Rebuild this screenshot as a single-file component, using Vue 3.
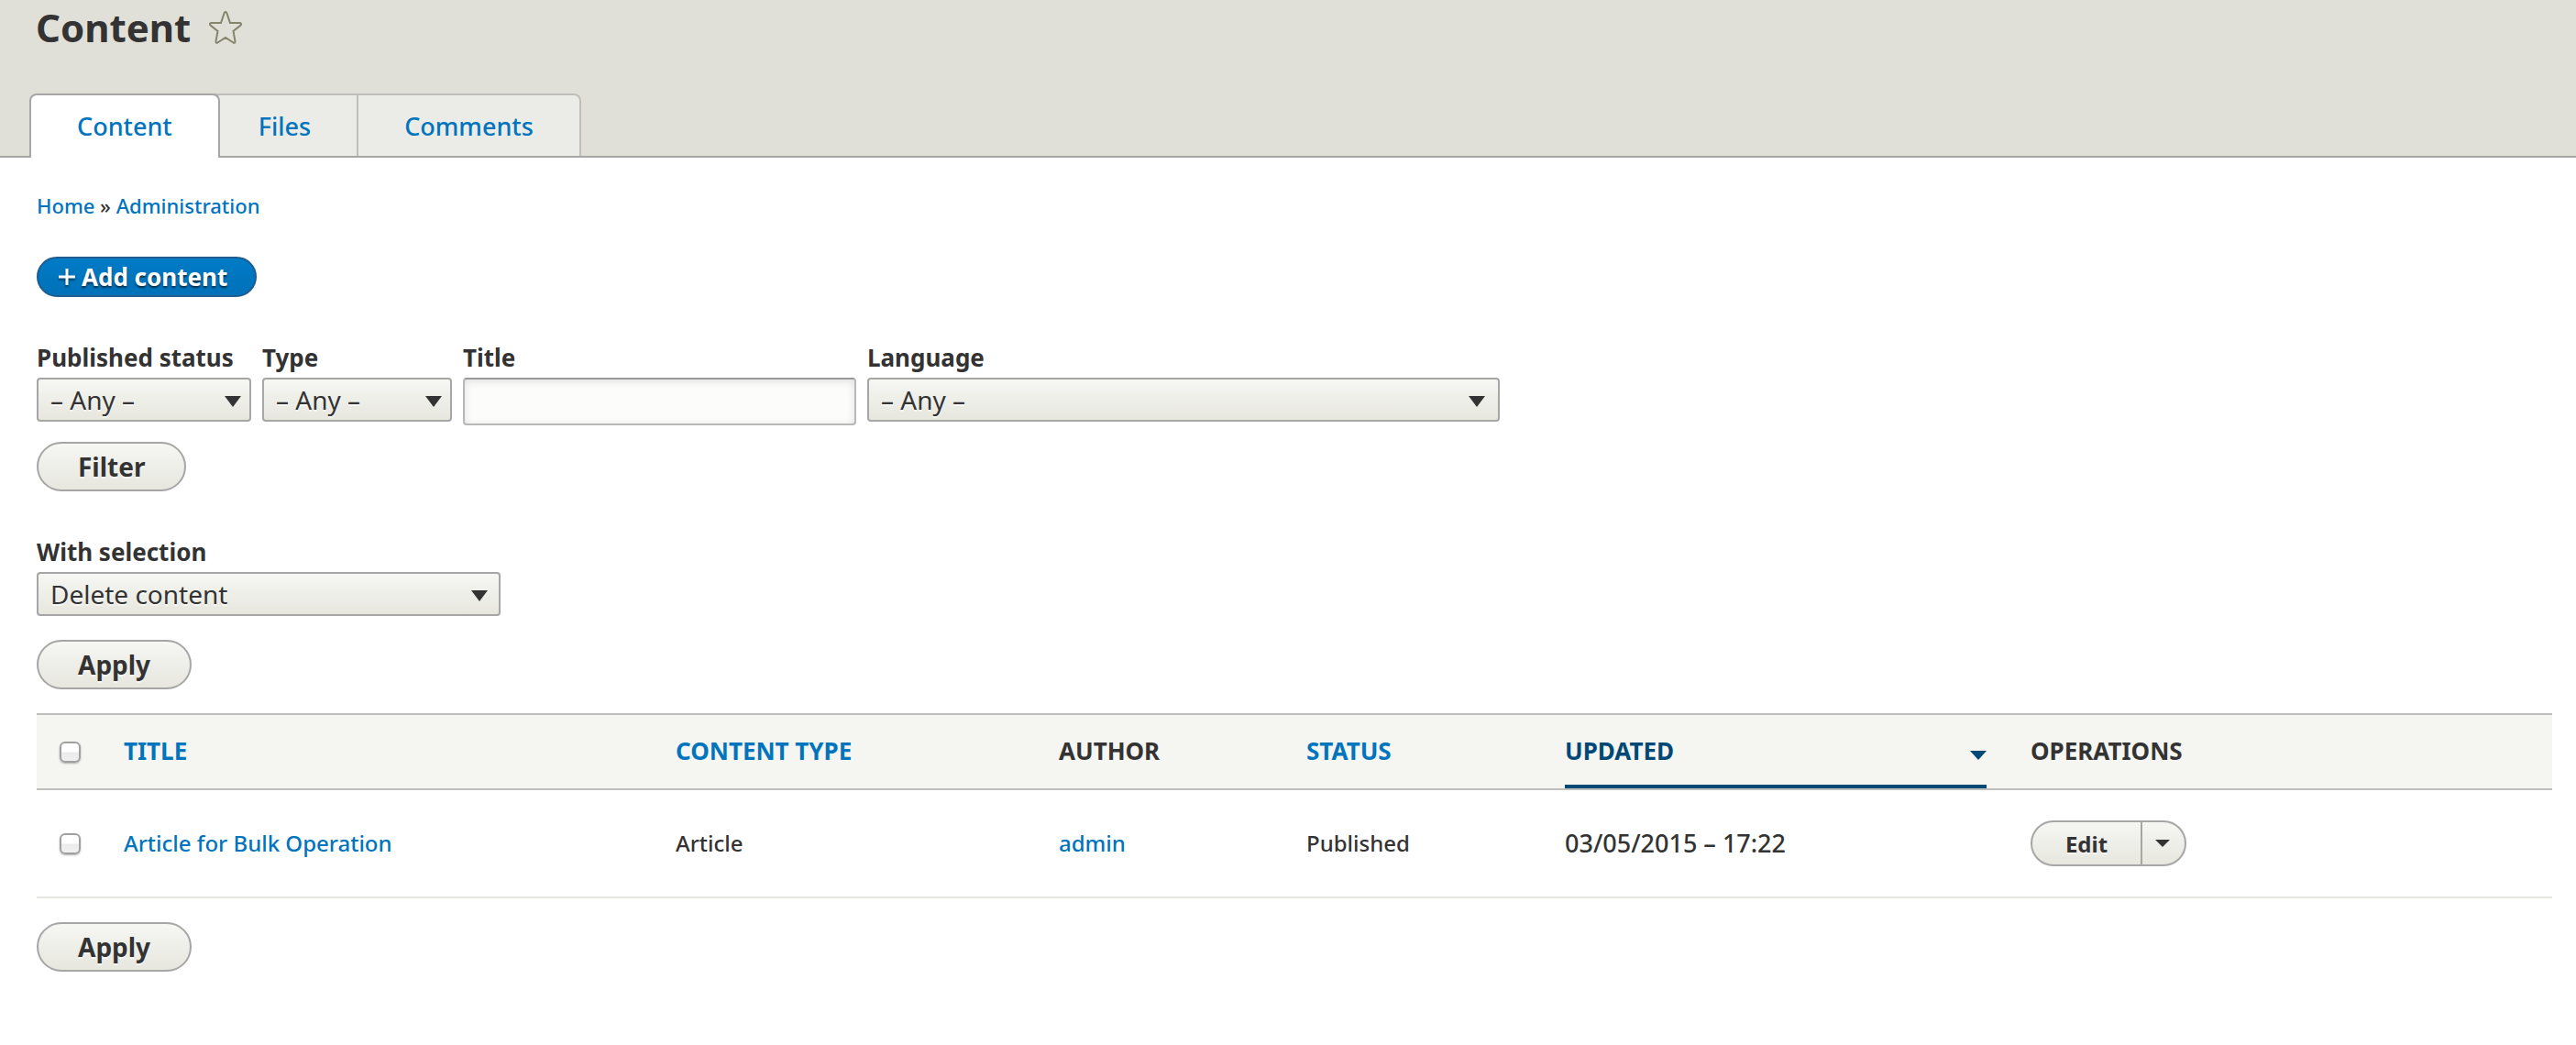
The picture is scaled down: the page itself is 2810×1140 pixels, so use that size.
<script setup>
import { ref } from 'vue'

const tabs = [
  { label: 'Content', active: true },
  { label: 'Files', active: false },
  { label: 'Comments', active: false },
]

const status = ref('any')
const type = ref('any')
const title = ref('')
const language = ref('any')
const action = ref('delete')

const rows = [
  {
    id: 1,
    title: 'Article for Bulk Operation',
    type: 'Article',
    author: 'admin',
    status: 'Published',
    updated: '03/05/2015 – 17:22',
  },
]
</script>

<template>
  <div class="page">
    <header class="header">
      <div class="heading">
        <h1>Content</h1>
        <button type="button" class="star" aria-label="Add to shortcuts">
          <svg viewBox="0 0 36 36" width="36" height="36" aria-hidden="true">
            <path
              d="M18 1Q19 1 19.500 2.500L23 13H33.500Q36 13.500 34.500 15.500L26.500 22L28.500 33Q28.500 35.500 26.500 34.500L18 29L9.500 34.500Q7.500 35.500 7.500 33L9.500 22L1.500 15.500Q0 13.500 2.500 13H13L16.500 2.500Q17 1 18 1Z"
            />
          </svg>
        </button>
      </div>
      <nav class="tabs" aria-label="Primary tabs">
        <a v-for="tab in tabs" :key="tab.label" href="#" class="tab" :class="{ active: tab.active }">{{ tab.label }}</a>
      </nav>
    </header>

    <main class="main">
      <nav class="breadcrumb" aria-label="Breadcrumb">
        <a href="#">Home</a> » <a href="#">Administration</a>
      </nav>

      <a href="#" class="add">
        <svg viewBox="0 0 18 18" width="18" height="18" aria-hidden="true">
          <path d="M7.500 0h3v7.500H18v3h-7.500V18h-3v-7.500H0v-3h7.500z" />
        </svg>
        Add content
      </a>

      <form class="filters" @submit.prevent>
        <div class="fields">
          <div class="field field-status">
            <label for="status">Published status</label>
            <select id="status" v-model="status"><option value="any">– Any –</option></select>
          </div>
          <div class="field field-type">
            <label for="type">Type</label>
            <select id="type" v-model="type"><option value="any">– Any –</option></select>
          </div>
          <div class="field field-title">
            <label for="title">Title</label>
            <input id="title" v-model="title" type="text" />
          </div>
          <div class="field field-language">
            <label for="language">Language</label>
            <select id="language" v-model="language"><option value="any">– Any –</option></select>
          </div>
        </div>
        <button type="submit" class="button">Filter</button>
      </form>

      <form class="bulk" @submit.prevent>
        <div class="field field-action">
          <label for="action">With selection</label>
          <select id="action" v-model="action"><option value="delete">Delete content</option></select>
        </div>
        <button type="submit" class="button">Apply</button>

        <table>
          <thead>
            <tr>
              <th class="col-check"><input type="checkbox" aria-label="Select all rows" /></th>
              <th class="col-title"><a href="#">Title</a></th>
              <th class="col-type"><a href="#">Content type</a></th>
              <th class="col-author">Author</th>
              <th class="col-status"><a href="#">Status</a></th>
              <th class="col-updated">
                <a href="#" class="sorted">Updated<i class="sort-arrow"></i></a>
              </th>
              <th>Operations</th>
            </tr>
          </thead>
          <tbody>
            <tr v-for="row in rows" :key="row.id">
              <td class="col-check"><input type="checkbox" :aria-label="'Select ' + row.title" /></td>
              <td><a href="#">{{ row.title }}</a></td>
              <td>{{ row.type }}</td>
              <td><a href="#">{{ row.author }}</a></td>
              <td>{{ row.status }}</td>
              <td class="date">{{ row.updated }}</td>
              <td class="operations">
                <div class="dropbutton">
                  <button type="button" class="edit">Edit</button>
                  <button type="button" class="toggle" aria-label="List additional actions"><i></i></button>
                </div>
              </td>
            </tr>
          </tbody>
        </table>

        <button type="submit" class="button">Apply</button>
      </form>
    </main>
  </div>
</template>

<style>
body {
  background: #fff;
}
</style>

<style scoped>
.page {
  font-family: 'Noto Sans', 'Open Sans', sans-serif;
  font-size: 24px;
  font-weight: 500;
  color: #333;
}

.page *,
.page *::before,
.page *::after {
  box-sizing: border-box;
}

a {
  color: #0074bd;
  text-decoration: none;
}

button,
input,
select {
  margin: 0;
  font-family: inherit;
  color: #333;
}

/* Header */
.header {
  padding: 0 32px;
  background: #e0e0d8;
  border-bottom: 2px solid #a6a6a6;
}

.heading {
  display: flex;
  align-items: center;
  gap: 20px;
  padding-left: 7px;
}

h1 {
  margin: 0;
  font-size: 42px;
  line-height: 60px;
}

.star {
  display: block;
  width: 36px;
  height: 36px;
  padding: 0;
  border: 0;
  background: none;
}

.star svg {
  display: block;
  fill: none;
  stroke: #85836b;
  stroke-width: 2;
}

.tabs {
  display: flex;
  margin-top: 42px;
  margin-bottom: -2px;
}

.tab {
  height: 68px;
  padding: 0 50px;
  border: 2px solid #bebebb;
  border-bottom: 0;
  border-left: 0;
  background: #ebece7;
  font-size: 27px;
  line-height: 68px;
}

.tab:nth-child(2) {
  margin-left: -8px;
}

.tab:last-child {
  border-top-right-radius: 8px;
}

.tab.active {
  z-index: 1;
  height: 70px;
  border-left: 2px solid #a6a6a6;
  border-color: #a6a6a6;
  border-radius: 8px 8px 0 0;
  background: #fff;
}

/* Main region */
.main {
  padding: 36px 26px 80px 40px;
}

.breadcrumb {
  font-size: 22px;
  line-height: 32px;
}

.add {
  display: flex;
  align-items: center;
  gap: 7px;
  width: fit-content;
  height: 44px;
  margin-top: 40px;
  padding: 0 30px 0 22px;
  border: 2px solid #1e5c90;
  border-radius: 22px;
  background: linear-gradient(#007bc6, #0071b8);
  color: #fff;
  font-size: 26px;
  font-weight: 700;
  text-shadow: 0 2px 2px rgba(0, 0, 0, 0.6);
}

.add svg {
  fill: #fff;
  filter: drop-shadow(0 2px 1px rgba(0, 0, 0, 0.5));
}

.filters,
.bulk {
  margin-top: 48px;
}

.fields {
  display: flex;
  flex-wrap: wrap;
  align-items: flex-start;
  gap: 12px;
}

.field {
  display: flex;
  flex-direction: column;
  gap: 4px;
}

.field-status {
  width: 234px;
}

.field-type {
  width: 207px;
}

.field-title {
  width: 429px;
}

.field-language {
  width: 690px;
}

.field-action {
  width: 506px;
}

label {
  font-size: 26px;
  font-weight: 700;
  line-height: 36px;
}

select {
  appearance: none;
  width: 100%;
  height: 48px;
  padding: 0 36px 0 13px;
  border: 2px solid #a6a6a6;
  border-radius: 4px;
  background:
    url("data:image/svg+xml,%3Csvg xmlns='http://www.w3.org/2000/svg' width='18' height='12'%3E%3Cpath d='M0 0h18l-9 12z' fill='%23333'/%3E%3C/svg%3E") no-repeat calc(99% - 7px) 56%,
    linear-gradient(#f6f6f3, #e7e7df);
  font-size: 28px;
  font-weight: 400;
  line-height: 44px;
  text-shadow: 0 2px rgba(255, 255, 255, 0.6);
}

input[type='text'] {
  width: 100%;
  height: 52px;
  padding: 0 14px;
  border: 2px solid #b8b8b8;
  border-top-color: #999;
  border-radius: 4px;
  background: #fcfcfa;
  box-shadow: inset 0 2px 8px rgba(0, 0, 0, 0.12);
  font-size: 28px;
}

.button {
  display: block;
  height: 54px;
  padding: 0 43px;
  border: 2px solid #a6a6a6;
  border-radius: 27px;
  background: linear-gradient(#f6f6f3, #e7e7df);
  font-size: 28px;
  font-weight: 700;
  line-height: 50px;
  text-shadow: 0 2px rgba(255, 255, 255, 0.6);
}

.filters .button {
  margin-top: 18px;
}

.bulk .button {
  margin-top: 26px;
}

/* Content table */
table {
  width: 100%;
  margin-top: 26px;
  border-spacing: 0;
  table-layout: fixed;
}

th {
  height: 84px;
  padding: 0 24px 2px;
  border: solid #bebfba;
  border-width: 2px 0;
  background: #f5f5f1;
  font-size: 26px;
  text-align: left;
  text-transform: uppercase;
}

td {
  height: 118px;
  padding: 0 24px 2px;
  border-bottom: 2px solid #e6e5df;
}

.col-check {
  width: 71px;
  padding: 0 22px 0 25px;
}

.col-title {
  width: 602px;
}

.col-type {
  width: 418px;
}

.col-author {
  width: 270px;
}

.col-status {
  width: 282px;
}

.col-updated {
  width: 508px;
  padding-bottom: 0;
}

.date {
  font-size: 27px;
}

.operations {
  padding-bottom: 0;
}

.sorted {
  display: flex;
  align-items: baseline;
  justify-content: space-between;
  height: 80px;
  border-bottom: 4px solid #004875;
  color: #004875;
  line-height: 78px;
}

.sort-arrow {
  width: 18px;
  height: 10px;
  background: #004875;
  clip-path: polygon(0 0, 100% 0, 50% 100%);
}

input[type='checkbox'] {
  display: block;
  appearance: none;
  width: 23px;
  height: 23px;
  border: 2px solid #a0a0a0;
  border-radius: 6px;
  background: linear-gradient(#fff 45%, #ebebeb 55%, #f1f1f1);
  box-shadow: 0 1px 2px rgba(0, 0, 0, 0.3);
}

.dropbutton {
  display: flex;
  width: 170px;
  height: 50px;
  overflow: hidden;
  border: 2px solid #a6a6a6;
  border-radius: 25px;
  background: linear-gradient(#f6f6f3, #e7e7df);
}

.dropbutton button {
  border: 0;
  background: none;
}

.edit {
  flex: 1;
  padding: 0;
  font-size: 24px;
  font-weight: 700;
  text-shadow: 0 2px rgba(255, 255, 255, 0.6);
}

.dropbutton .toggle {
  display: flex;
  align-items: center;
  width: 48px;
  padding: 0 14px;
  border-left: 2px solid #a6a6a6;
}

.toggle i {
  width: 16px;
  height: 8px;
  background: #333;
  clip-path: polygon(0 0, 100% 0, 50% 100%);
}
</style>
